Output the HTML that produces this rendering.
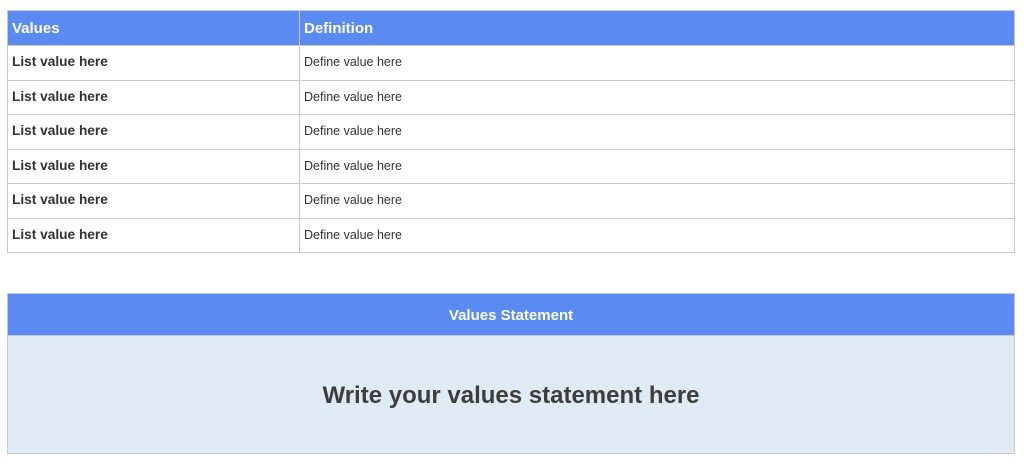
<!DOCTYPE html>
<html><head><style>
body{margin:0;background:#fff;width:1024px;height:465px;position:relative;font-family:"Liberation Sans",sans-serif;overflow:hidden}
.t{position:absolute;left:7px;top:10px;width:1008px;height:243px;border:1px solid #c8c8c8;box-sizing:border-box}
.h{position:absolute;left:0;top:0;width:100%;height:34px;background:#598bf3;color:#fff;font-weight:bold;font-size:15px}
.h span{position:absolute;top:9px}
.r{position:absolute;left:0;width:100%;height:34.5px;border-top:1px solid #c8c8c8;box-sizing:border-box;color:#333}
.r b{position:absolute;left:4px;top:8px;font-size:13.7px}
.r i{position:absolute;left:296px;top:9px;font-size:12.5px;font-style:normal}
.v{position:absolute;left:291px;top:0;width:1px;height:100%;background:#c8c8c8}
.s{position:absolute;left:7px;top:293px;width:1008px;height:161px;border:1px solid #c8c8c8;box-sizing:border-box;background:#e0eaf5}
.sh{height:41px;background:#598bf3;color:#fff;font-weight:bold;font-size:15px;text-align:center;line-height:43px;border-bottom:1px solid #c8c8c8}
.sb{text-align:center;font-weight:bold;font-size:24px;color:#3d3d3d;margin-top:46px}
</style></head><body>
<div class="t">
<div class="h"><span style="left:4px">Values</span><span style="left:296px">Definition</span></div>
<div class="r" style="top:34px"><b>List value here</b><i>Define value here</i></div>
<div class="r" style="top:68.5px"><b>List value here</b><i>Define value here</i></div>
<div class="r" style="top:103px"><b>List value here</b><i>Define value here</i></div>
<div class="r" style="top:137.5px"><b>List value here</b><i>Define value here</i></div>
<div class="r" style="top:172px"><b>List value here</b><i>Define value here</i></div>
<div class="r" style="top:206.5px"><b>List value here</b><i>Define value here</i></div>
<div class="v"></div>
</div>
<div class="s"><div class="sh">Values Statement</div><div class="sb">Write your values statement here</div></div>
</body></html>
